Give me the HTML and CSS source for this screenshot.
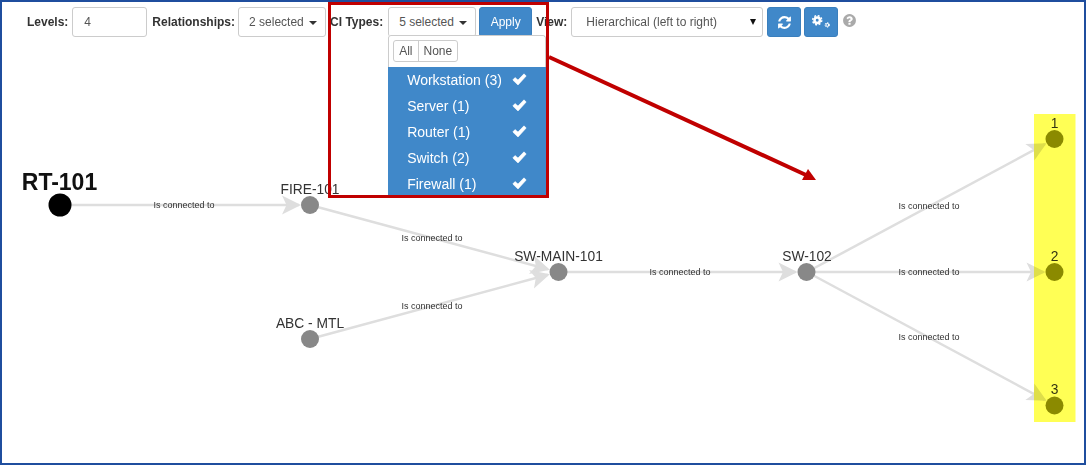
FILE: index.html
```html
<!DOCTYPE html>
<html lang="en">
<head>
<meta charset="utf-8">
<title>CI relationship map</title>
<link rel="stylesheet" href="styles.css">
</head>
<body>
<div class="frame">
  <svg class="graph" width="1082" height="461" viewBox="2 2 1082 461" xmlns="http://www.w3.org/2000/svg">
    <defs>
      <marker id="tip" markerUnits="userSpaceOnUse" markerWidth="22" markerHeight="22" refX="18" refY="11" orient="auto">
        <path class="arrow" d="M1 1.5 L20 11 L1 20.5 L5.5 11 Z"/>
      </marker>
    </defs>
    <line class="edge" x1="60" y1="205" x2="299" y2="205" marker-end="url(#tip)"/>
    <line class="edge" x1="310" y1="205" x2="547.9" y2="269.2" marker-end="url(#tip)"/>
    <line class="edge" x1="310" y1="339" x2="547.9" y2="274.8" marker-end="url(#tip)"/>
    <line class="edge" x1="558" y1="272" x2="795.5" y2="272" marker-end="url(#tip)"/>
    <line class="edge" x1="807" y1="272" x2="1044.8" y2="144.2" marker-end="url(#tip)"/>
    <line class="edge" x1="807" y1="272" x2="1043.5" y2="272" marker-end="url(#tip)"/>
    <line class="edge" x1="807" y1="272" x2="1044.8" y2="399.8" marker-end="url(#tip)"/>

    <circle class="root" cx="60" cy="205" r="11.5"/>
    <circle class="node" cx="310" cy="205" r="9"/>
    <circle class="node" cx="310" cy="339" r="9"/>
    <circle class="node" cx="558.5" cy="272" r="9"/>
    <circle class="node" cx="806.5" cy="272" r="9"/>
    <circle class="node node-hl" cx="1054.5" cy="139" r="9"/>
    <circle class="node node-hl" cx="1054.5" cy="272" r="9"/>
    <circle class="node node-hl" cx="1054.5" cy="405.5" r="9"/>

    <text class="root-label" x="59.5" y="190">RT-101</text>
    <text class="label" x="310" y="194">FIRE-101</text>
    <text class="label" x="310" y="328">ABC - MTL</text>
    <text class="label" x="558.5" y="261">SW-MAIN-101</text>
    <text class="label" x="807" y="261">SW-102</text>
    <text class="label" x="1054.5" y="128">1</text>
    <text class="label" x="1054.5" y="261">2</text>
    <text class="label" x="1054.5" y="394">3</text>

    <text class="edge-label" x="184" y="208">Is connected to</text>
    <text class="edge-label" x="432" y="241">Is connected to</text>
    <text class="edge-label" x="432" y="309">Is connected to</text>
    <text class="edge-label" x="680" y="275">Is connected to</text>
    <text class="edge-label" x="929" y="209">Is connected to</text>
    <text class="edge-label" x="929" y="275">Is connected to</text>
    <text class="edge-label" x="929" y="340">Is connected to</text>

    <rect class="highlight" x="1034" y="114" width="41.5" height="308"/>

    <path class="callout-arrow" d="M549 57 L806 175"/>
    <path class="callout-head" d="M816 180 L802 180 L808 169 Z"/>
  </svg>

  <div class="toolbar">
    <label class="field-label levels-label">Levels:</label>
    <input class="text-input" type="text" value="4">
    <label class="field-label rel-label">Relationships:</label>
    <button class="btn btn-default rel-btn">2 selected <span class="caret"></span></button>
    <label class="field-label ci-label">CI Types:</label>
    <div class="dropdown">
      <button class="btn btn-default ci-btn">5 selected <span class="caret"></span></button>
      <div class="menu">
        <div class="menu-head">
          <div class="btn-group">
            <span class="mini">All</span><span class="mini">None</span>
          </div>
        </div>
        <ul class="menu-list">
          <li><span class="item-text">Workstation (3)</span><svg class="check" viewBox="0 0 15 13"><path d="M.8 7 3 4.6 6 7 12 .8 14.2 3 6 12Z"/></svg></li>
          <li><span class="item-text">Server (1)</span><svg class="check" viewBox="0 0 15 13"><path d="M.8 7 3 4.6 6 7 12 .8 14.2 3 6 12Z"/></svg></li>
          <li><span class="item-text">Router (1)</span><svg class="check" viewBox="0 0 15 13"><path d="M.8 7 3 4.6 6 7 12 .8 14.2 3 6 12Z"/></svg></li>
          <li><span class="item-text">Switch (2)</span><svg class="check" viewBox="0 0 15 13"><path d="M.8 7 3 4.6 6 7 12 .8 14.2 3 6 12Z"/></svg></li>
          <li><span class="item-text">Firewall (1)</span><svg class="check" viewBox="0 0 15 13"><path d="M.8 7 3 4.6 6 7 12 .8 14.2 3 6 12Z"/></svg></li>
        </ul>
      </div>
    </div>
    <button class="btn btn-primary apply-btn">Apply</button>
    <label class="field-label view-label">View:</label>
    <div class="select-wrap">
      <select class="select"><option>Hierarchical (left to right)</option></select>
      <span class="select-arrow"></span>
    </div>
    <button class="btn btn-primary icon-btn refresh-btn" aria-label="Refresh">
      <svg class="btn-icon" viewBox="0 0 1792 1792"><path d="M1639 1056q0 5-1 7-64 268-268 434.5t-478 166.5q-146 0-282.5-55t-243.5-157l-129 129q-19 19-45 19t-45-19-19-45v-448q0-26 19-45t45-19h448q26 0 45 19t19 45-19 45l-137 137q71 66 161 102t187 36q134 0 250-65t186-179q11-17 53-117 8-23 30-23h192q13 0 22.5 9.5t9.5 22.5zm25-800v448q0 26-19 45t-45 19h-448q-26 0-45-19t-19-45 19-45l138-138q-148-137-349-137-134 0-250 65t-186 179q-11 17-53 117-8 23-30 23h-199q-13 0-22.5-9.5t-9.5-22.5v-7q65-268 270-434.5t480-166.5q146 0 284 55.5t245 156.5l130-129q19-19 45-19t45 19 19 45z"/></svg>
    </button>
    <button class="btn btn-primary icon-btn cog-btn" aria-label="Settings">
      <svg class="cog-icon" viewBox="0 0 18 14">
        <circle class="gear" cx="5.2" cy="5.2" r="2.7" stroke-width="2.5"/>
        <circle class="gear" cx="5.2" cy="5.2" r="4.5" stroke-width="1.6" stroke-dasharray="1.9 1.63"/>
        <circle class="gear" cx="15.3" cy="9.9" r="1.4" stroke-width="1.1"/>
        <circle class="gear" cx="15.3" cy="9.9" r="2.3" stroke-width="1" stroke-dasharray="1.2 1.2"/>
      </svg>
    </button>
    <svg class="help" viewBox="0 0 1792 1792"><path d="M1024 1376v-192q0-14-9-23t-23-9h-192q-14 0-23 9t-9 23v192q0 14 9 23t23 9h192q14 0 23-9t9-23zm256-672q0-88-55.5-163t-138.5-116-170-41q-243 0-371 213-15 24 8 42l132 100q7 6 19 6 16 0 25-12 53-68 86-92 34-24 86-24 48 0 85.5 26t37.5 59q0 38-20 61t-68 45q-63 28-115.5 86.5t-52.5 125.5v36q0 14 9 23t23 9h192q14 0 23-9t9-23q0-19 21.5-49.5t54.5-49.5q32-18 49-28.5t46-35 44.5-48 28-60.5 12.5-81zm384 192q0 209-103 385.5t-279.5 279.5-385.5 103-385.5-103-279.5-279.5-103-385.5 103-385.5 279.5-279.5 385.5-103 385.5 103 279.5 279.5 103 385.5z"/></svg>
  </div>

  <div class="callout-box"></div>
</div>
</body>
</html>
```
FILE: styles.css
```css
* { box-sizing: border-box; }
html, body { margin: 0; padding: 0; background: #fff; }
body { font-family: "Liberation Sans", Arial, sans-serif; color: #333; }

.frame {
  position: relative;
  width: 1086px;
  height: 465px;
  border: 2px solid #1f4e9e;
  overflow: hidden;
  background: #fff;
}

/* canvas */
.graph { position: absolute; left: 0; top: 0; }
.edge { stroke: #dedede; stroke-width: 2.5; fill: none; }
.arrow { fill: #dedede; }
.root { fill: #000; }
.node { fill: #888; }
.node-hl { fill: #8b8a00; }
.label { font: 13.8px "Liberation Sans", Arial, sans-serif; fill: #333; text-anchor: middle; }
.root-label { font: bold 23px "Liberation Sans", Arial, sans-serif; fill: #111; text-anchor: middle; }
.edge-label { font: 9px "Liberation Sans", Arial, sans-serif; fill: #333; text-anchor: middle; }
.highlight { fill: #ffff55; mix-blend-mode: multiply; }
.callout-arrow { stroke: #c00000; stroke-width: 4; fill: none; }
.callout-head { fill: #c00000; }

/* toolbar */
.toolbar {
  position: relative;
  display: flex;
  align-items: flex-start;
  height: 30px;
  margin-top: 5px;
  padding-left: 25px;
  font-size: 12px;
}
.field-label {
  font-weight: bold;
  font-size: 12px;
  line-height: 30px;
  color: #333;
}
.levels-label { margin-right: 4px; }
.rel-label { margin-left: 5px; margin-right: 3px; }
.ci-label { margin-left: 4px; margin-right: 5px; }
.view-label { margin-left: 4px; margin-right: 4px; }

.text-input {
  width: 75px;
  height: 30px;
  padding: 0 11px;
  border: 1px solid #ccc;
  border-radius: 3px;
  font: 12px "Liberation Sans", Arial, sans-serif;
  color: #555;
  background: #fff;
}
.btn {
  height: 30px;
  padding: 0 10px;
  border: 1px solid transparent;
  border-radius: 3px;
  font: 12px "Liberation Sans", Arial, sans-serif;
  white-space: nowrap;
}
.btn-default { background: #fff; border-color: #ccc; color: #555; }
.btn-primary { background: #4088c9; border-color: #3a7fbd; color: #fff; }
.rel-btn { width: 88px; }
.ci-btn { width: 88px; }
.apply-btn { width: 53px; margin-left: 3px; }
.caret {
  display: inline-block;
  width: 0;
  height: 0;
  margin-left: 2px;
  vertical-align: middle;
  border-top: 4px solid #333;
  border-left: 4px solid transparent;
  border-right: 4px solid transparent;
}

/* dropdown */
.dropdown { position: relative; width: 88px; }
.menu {
  position: absolute;
  left: 0;
  top: 28px;
  width: 158px;
  height: 160px;
  overflow: hidden;
  background: #fff;
  border-radius: 3px 3px 0 0;
}
.menu-head {
  height: 32px;
  padding: 4px 5px 0;
  border: 1px solid #ccc;
  border-bottom: 0;
  border-radius: 3px 3px 0 0;
}
.btn-group { display: flex; width: 65px; border: 1px solid #ccc; border-radius: 3px; height: 22px; margin-left: -1px; }
.mini { padding: 0 5px; font-size: 12px; line-height: 20px; color: #555; }
.mini + .mini { border-left: 1px solid #ccc; }
.menu-list { list-style: none; margin: 0; padding: 0; background: #4088c9; }
.menu-list li {
  display: flex;
  align-items: center;
  height: 26px;
  padding-left: 19px;
  font-size: 14px;
  color: #fff;
}
.item-text { width: 104.5px; }
.check { width: 15px; height: 13px; fill: #fff; stroke: #fff; stroke-width: .6; stroke-linejoin: round; margin-top: -2px; }

/* view select */
.select-wrap { position: relative; width: 192px; height: 30px; }
.select {
  appearance: none;
  width: 100%;
  height: 30px;
  padding: 0 14px;
  border: 1px solid #ccc;
  border-radius: 3px;
  background: #fff;
  font: 12px "Liberation Sans", Arial, sans-serif;
  color: #555;
}
.select-arrow {
  position: absolute;
  right: 7px;
  top: 12px;
  border-top: 6px solid #111;
  border-left: 3.5px solid transparent;
  border-right: 3.5px solid transparent;
}
.icon-btn {
  display: flex;
  align-items: center;
  justify-content: center;
  width: 34px;
  padding: 0;
}
.refresh-btn { margin-left: 4px; }
.cog-btn { margin-left: 3px; }
.btn-icon { width: 15px; height: 15px; fill: #fff; }
.cog-icon { width: 18px; height: 14px; }
.gear { fill: none; stroke: #fff; }
.help { width: 15px; height: 15px; margin: 6px 0 0 4px; fill: #aaa; }

/* annotation */
.callout-box {
  position: absolute;
  left: 326px;
  top: 0;
  width: 221px;
  height: 196px;
  border: 3px solid #c00000;
  pointer-events: none;
}
```
